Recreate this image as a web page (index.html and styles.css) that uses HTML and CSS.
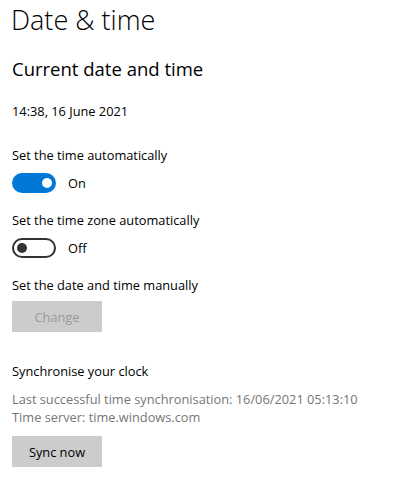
FILE: index.html
```html
<!DOCTYPE html>
<html>
<head>
<meta charset="utf-8">
<link rel="stylesheet" href="styles.css">
</head>
<body>
<div class="page">
  <h1 class="title">Date &amp; time</h1>
  <h2 class="subtitle">Current date and time</h2>
  <div class="text now">14:38, 16 June 2021</div>

  <div class="text label first">Set the time automatically</div>
  <div class="toggle-row">
    <span class="toggle on"><span class="knob"></span></span>
    <span class="text state">On</span>
  </div>

  <div class="text label">Set the time zone automatically</div>
  <div class="toggle-row">
    <span class="toggle off"><span class="knob"></span></span>
    <span class="text state">Off</span>
  </div>

  <div class="text label">Set the date and time manually</div>
  <button class="btn disabled">Change</button>

  <div class="text label sync-head">Synchronise your clock</div>
  <div class="text muted first-muted">Last successful time synchronisation: 16/06/2021 05:13:10</div>
  <div class="text muted">Time server: time.windows.com</div>
  <button class="btn sync">Sync now</button>
</div>
</body>
</html>
```
FILE: styles.css
```css
html, body {
  margin: 0;
  padding: 0;
  background: #ffffff;
}
.page {
  padding: 4px 0 0 12px;
  font-family: "Open Sans", "Noto Sans", sans-serif;
  color: #000;
}
.title {
  margin: 0;
  font-size: 27px;
  font-weight: 300;
  line-height: 32px;
  margin-left: -1px;
}
.subtitle {
  margin: 21px 0 0 0;
  font-size: 18.5px;
  font-weight: 400;
  line-height: 24px;
}
.text {
  font-size: 12.8px;
  line-height: 18px;
}
.now {
  margin-top: 21px;
}
.label {
  margin-top: 18px;
}
.label.first {
  margin-top: 26px;
}
.toggle-row {
  display: flex;
  align-items: center;
  gap: 12px;
  margin-top: 9px;
  height: 20px;
}
.toggle {
  box-sizing: border-box;
  width: 44px;
  height: 20px;
  border-radius: 10px;
  display: flex;
  align-items: center;
  padding: 0 4px;
}
.toggle .knob {
  width: 10px;
  height: 10px;
  border-radius: 50%;
}
.toggle.on {
  background: #0078d7;
  justify-content: flex-end;
}
.toggle.on .knob {
  background: #ffffff;
}
.toggle.off {
  border: 2px solid #333333;
  background: #fff;
  padding: 0 3px;
}
.toggle.off .knob {
  background: #333333;
}
.state {
  line-height: 20px;
}
.btn {
  display: block;
  box-sizing: border-box;
  width: 90px;
  height: 31px;
  border: none;
  background: #cccccc;
  font-family: "Open Sans", "Noto Sans", sans-serif;
  font-size: 12.8px;
  color: #000;
  padding: 0;
  margin-top: 7px;
}
.btn.disabled {
  color: #9a9a9a;
}
.sync-head {
  margin-top: 30px;
}
.muted {
  color: #767676;
}
.first-muted {
  margin-top: 10px;
}
.btn.sync {
  margin-top: 10px;
}
```
